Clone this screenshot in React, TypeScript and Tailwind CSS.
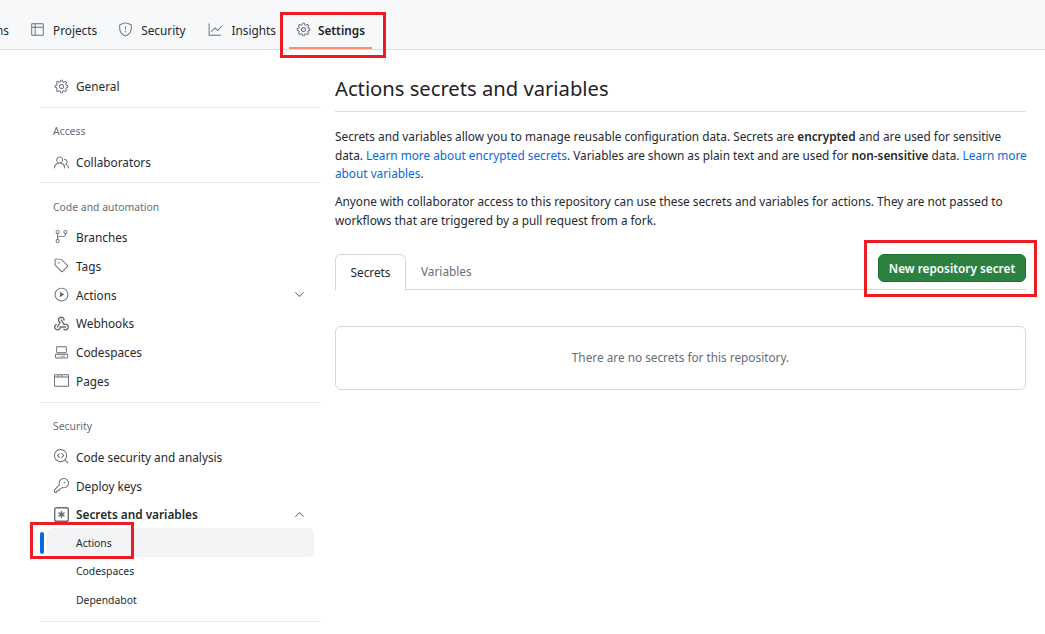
import React from "react";
import {
  GoGear, GoTable, GoShield, GoGraph, GoPeople, GoGitBranch, GoTag, GoPlay,
  GoCodespaces, GoBrowser, GoCodescan, GoKey, GoChevronDown, GoChevronUp,
} from "react-icons/go";

type Ico = React.ComponentType<{ className?: string }>;

const GoWebhook: Ico = ({ className }) => (
  <svg viewBox="0 0 16 16" fill="currentColor" className={className}>
    <path d="M5.5 4.25a2.25 2.25 0 0 1 4.5 0 .75.75 0 0 0 1.5 0 3.75 3.75 0 1 0-6.14 2.889l-2.272 4.258a.75.75 0 0 0 1.324.706L7 7.25a.75.75 0 0 0-.309-1.015A2.25 2.25 0 0 1 5.5 4.25Z" />
    <path d="M7.364 3.607a.75.75 0 0 1 1.03.257l2.608 4.349a3.75 3.75 0 1 1-.628 6.785.75.75 0 0 1 .752-1.299 2.25 2.25 0 1 0-.033-3.88.75.75 0 0 1-1.03-.256L7.107 4.636a.75.75 0 0 1 .257-1.03Z" />
    <path d="M2.9 8.776A.75.75 0 0 1 2.625 9.8 2.25 2.25 0 1 0 6 11.75a.75.75 0 0 1 .75-.751h5.5a.75.75 0 0 1 0 1.5H7.425a3.751 3.751 0 1 1-5.55-3.998.75.75 0 0 1 1.024.274Z" />
  </svg>
);

const GoKeyAsterisk: Ico = ({ className }) => (
  <svg viewBox="0 0 16 16" fill="currentColor" className={className}>
    <path d="M0 2.75A2.75 2.75 0 0 1 2.75 0h10.5A2.75 2.75 0 0 1 16 2.75v10.5A2.75 2.75 0 0 1 13.25 16H2.75A2.75 2.75 0 0 1 0 13.25ZM2.75 1.5c-.69 0-1.25.56-1.25 1.25v10.5c0 .69.56 1.25 1.25 1.25h10.5c.69 0 1.25-.56 1.25-1.25V2.75c0-.69-.56-1.25-1.25-1.25Z" />
    <path d="M8 4a.75.75 0 0 1 .75.75V6.7l1.69-.975a.75.75 0 0 1 .75 1.3L9.5 8l1.69.976a.75.75 0 0 1-.75 1.298L8.75 9.3v1.951a.75.75 0 0 1-1.5 0V9.299l-1.69.976a.75.75 0 0 1-.75-1.3L6.5 8l-1.69-.975a.75.75 0 0 1 .75-1.3l1.69.976V4.75A.75.75 0 0 1 8 4Z" />
  </svg>
);

function Tab({ icon: I, label, active }: { icon: Ico; label: string; active?: boolean }) {
  return (
    <div className={`relative flex h-full items-center px-[7px] ${active ? "gap-[7px] font-semibold text-[#1f2328]" : "gap-[8px] text-[#24292f]"}`}>
      <I className="h-[15px] w-[15px] text-[#656d76]" />
      <span>{label}</span>
      {active && <span className="absolute bottom-[0px] left-0 right-0 h-[2px] bg-[#fd8c73]" />}
    </div>
  );
}

function Row({ icon: I, label, bold, chevron }: { icon: Ico; label: string; bold?: boolean; chevron?: "up" | "down" }) {
  return (
    <div className={`flex h-[28.8px] items-center px-[14px] text-[#24292f] ${bold ? "font-semibold" : ""}`}>
      <I className="mr-[7px] h-[15px] w-[15px] text-[#656d76]" />
      <span className="flex-1">{label}</span>
      {chevron === "down" && <GoChevronDown className="h-[15px] w-[15px] text-[#656d76]" />}
      {chevron === "up" && <GoChevronUp className="h-[15px] w-[15px] text-[#656d76]" />}
    </div>
  );
}

function Sub({ label, active }: { label: string; active?: boolean }) {
  return (
    <div className="relative flex h-[28.8px] items-center">
      {active && <span className="absolute left-0 top-[4px] h-[22px] w-[4px] rounded-full bg-[#0969da]" />}
      <div className={`ml-[7px] flex h-[28.8px] w-[267px] items-center rounded-[6px] pl-[29px] text-[10.4px] text-[#24292f] ${active ? "bg-[#f2f3f5]" : ""}`}>
        {label}
      </div>
    </div>
  );
}

function Heading({ children }: { children: React.ReactNode }) {
  return <div className="flex h-[24px] items-center pl-[13px] text-[10.4px] text-[#656d76]">{children}</div>;
}

function Divider({ className = "" }: { className?: string }) {
  return <div className={`h-[1px] bg-[#e7e9ec] ${className}`} />;
}

const Redbox = ({ className }: { className: string }) => (
  <div className={`pointer-events-none absolute border-[3px] border-[#ed1c24] ${className}`} />
);

export default function App() {
  return (
    <div
      className="relative h-[634px] w-[1045px] overflow-hidden bg-white text-[11.8px] leading-[18px] text-[#24292f]"
      style={{ fontFamily: '"Noto Sans", "Open Sans", sans-serif' }}
    >
      <header className="flex h-[50px] items-start border-b border-[#d8dee4] bg-[#f6f8fa]">
        <div className="ml-[-47px] flex h-[49px] items-center pt-[10px]">
          <div className="flex h-full w-[70px] items-center justify-end pr-[14px] text-[#24292f]">Actions</div>
          <div className="flex h-full"><Tab icon={GoTable} label="Projects" /></div>
          <div className="ml-[7px] flex h-full"><Tab icon={GoShield} label="Security" /></div>
          <div className="ml-[9px] flex h-full"><Tab icon={GoGraph} label="Insights" /></div>
          <div className="ml-[6px] flex h-full"><Tab icon={GoGear} label="Settings" active /></div>
        </div>
      </header>

      <div className="flex pl-[40px] pt-[22px]">
        <aside className="w-[281px] shrink-0">
          <Row icon={GoGear} label="General" />
          <Divider className="mt-[6px]" />
          <div className="mt-[11px]"><Heading>Access</Heading></div>
          <div className="mt-[5px]"><Row icon={GoPeople} label="Collaborators" /></div>
          <Divider className="mt-[5px]" />
          <div className="mt-[12px]"><Heading>Code and automation</Heading></div>
          <div className="mt-[4px]">
            <Row icon={GoGitBranch} label="Branches" />
            <Row icon={GoTag} label="Tags" />
            <Row icon={GoPlay} label="Actions" chevron="down" />
            <Row icon={GoWebhook} label="Webhooks" />
            <Row icon={GoCodespaces} label="Codespaces" />
            <Row icon={GoBrowser} label="Pages" />
          </div>
          <Divider className="mt-[6.5px]" />
          <div className="mt-[11px]"><Heading>Security</Heading></div>
          <div className="mt-[4.5px]">
            <Row icon={GoCodescan} label="Code security and analysis" />
            <Row icon={GoKey} label="Deploy keys" />
            <Row icon={GoKeyAsterisk} label="Secrets and variables" bold chevron="up" />
          </div>
          <div className="mt-[-0.5px]">
            <Sub label="Actions" active />
            <Sub label="Codespaces" />
            <Sub label="Dependabot" />
          </div>
          <Divider className="mt-[6px]" />
        </aside>

        <main className="ml-[14px] w-[691px] shrink-0">
          <div className="flex h-[40px] items-start border-b border-[#d8dee4]">
            <h1 className="text-[20.2px] leading-[33px] font-normal text-[#1f2328]">Actions secrets and variables</h1>
          </div>
          <p className="mr-[-3px] mt-[15px] leading-[18.5px]">
            Secrets and variables allow you to manage reusable configuration data. Secrets are <b className="font-semibold">encrypted</b> and are used for sensitive data.{" "}
            <span className="text-[#0969da]">Learn more about encrypted secrets</span>. Variables are shown as plain text and are used for <b className="font-semibold">non-sensitive</b> data.{" "}
            <span className="text-[#0969da]">Learn more about variables</span>.
          </p>
          <p className="mt-[9.5px] leading-[18.5px]">
            Anyone with collaborator access to this repository can use these secrets and variables for actions. They are not passed to workflows that are triggered by a pull request from a fork.
          </p>
          <div className="relative mt-[24.5px] flex h-[36px] items-end border-b border-[#d0d7de]">
            <div className="mb-[-1px] flex h-[36px] w-[71px] items-center justify-center rounded-t-[6px] border border-b-0 border-[#d0d7de] bg-white text-[#24292f]">Secrets</div>
            <div className="flex h-[36px] items-center pl-[15px] pt-[1px] text-[#656d76]">Variables</div>
            <button className="absolute right-0 top-0 flex h-[28px] w-[148px] items-center justify-center rounded-[6px] border border-[#1f6f37] bg-[#2c8141] font-semibold text-white">
              New repository secret
            </button>
          </div>
          <div className="mt-[36px] flex h-[64px] items-center justify-center rounded-[6px] border border-[#d0d7de] pb-[1px] text-[#656d76]">
            There are no secrets for this repository.
          </div>
        </main>
      </div>

      <Redbox className="left-[280px] top-[12px] h-[46px] w-[106px]" />
      <Redbox className="left-[864px] top-[240px] h-[57px] w-[173px]" />
      <Redbox className="left-[30px] top-[522px] h-[37px] w-[104px]" />
    </div>
  );
}
